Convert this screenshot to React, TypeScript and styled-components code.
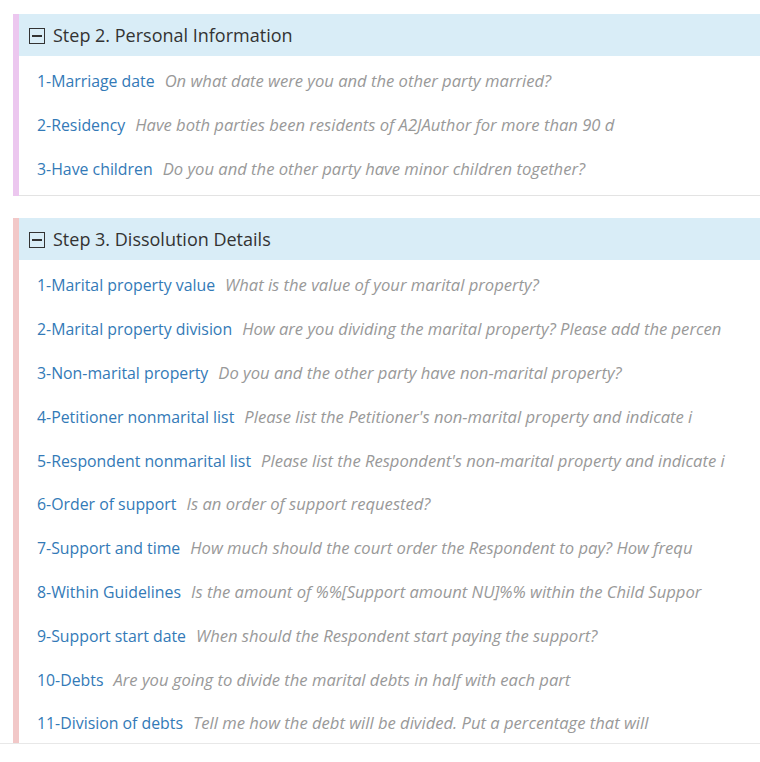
import React from "react";
import styled, { createGlobalStyle } from "styled-components";

interface Question {
    name: string;
    text: string;
}

interface Step {
    title: string;
    accent: string;
    questions: Question[];
}

const steps: Step[] = [
    {
        title: "Step 2. Personal Information",
        accent: "#ecc7ef",
        questions: [
            { name: "1-Marriage date", text: "On what date were you and the other party married?" },
            { name: "2-Residency", text: "Have both parties been residents of A2JAuthor for more than 90 d" },
            { name: "3-Have children", text: "Do you and the other party have minor children together?" },
        ],
    },
    {
        title: "Step 3. Dissolution Details",
        accent: "#f2c8c8",
        questions: [
            { name: "1-Marital property value", text: "What is the value of your marital property?" },
            { name: "2-Marital property division", text: "How are you dividing the marital property? Please add the percen" },
            { name: "3-Non-marital property", text: "Do you and the other party have non-marital property?" },
            { name: "4-Petitioner nonmarital list", text: "Please list the Petitioner's non-marital property and indicate i" },
            { name: "5-Respondent nonmarital list", text: "Please list the Respondent's non-marital property and indicate i" },
            { name: "6-Order of support", text: "Is an order of support requested?" },
            { name: "7-Support and time", text: "How much should the court order the Respondent to pay? How frequ" },
            { name: "8-Within Guidelines", text: "Is the amount of %%[Support amount NU]%% within the Child Suppor" },
            { name: "9-Support start date", text: "When should the Respondent start paying the support?" },
            { name: "10-Debts", text: "Are you going to divide the marital debts in half with each part" },
            { name: "11-Division of debts", text: "Tell me how the debt will be divided. Put a percentage that will" },
        ],
    },
];

const GlobalStyle = createGlobalStyle`
    body {
        margin: 0;
        background: #fff;
        font-family: "Open Sans", "Noto Sans", sans-serif;
    }
`;

const Viewport = styled.div`
    height: 744px;
    overflow: hidden;
    border-bottom: 1px solid #e8e8e8;
    padding: 14px 0 0 13px;
    box-sizing: border-box;
`;

const Panel = styled.section<{ $accent: string }>`
    border-left: 6px solid ${(p) => p.$accent};
    margin-bottom: 22px;
`;

const Header = styled.div`
    height: 42px;
    background: #d9edf7;
    display: flex;
    align-items: center;
    gap: 8px;
    padding-left: 10px;
    color: #333;
    font-size: 18px;
    cursor: pointer;
`;

const Toggle = styled.span`
    width: 14px;
    height: 14px;
    border: 1px solid #333;
    position: relative;
    flex-shrink: 0;
    margin-top: 1px;
    &::after {
        content: "";
        position: absolute;
        left: 2px;
        right: 2px;
        top: 6px;
        height: 2px;
        background: #333;
    }
`;

const List = styled.ul`
    list-style: none;
    margin: 0;
    padding: 3px 0 5px;
    border-bottom: 1px solid #e3e3e3;
`;

const Row = styled.li`
    height: 43.8px;
    line-height: 43.8px;
    padding-left: 18px;
    white-space: nowrap;
    overflow: hidden;
`;

const Name = styled.a`
    color: #337ab7;
    font-size: 15.85px;
    text-decoration: none;
`;

const Prompt = styled.span`
    color: #999;
    font-size: 16.6px;
    font-style: italic;
    margin-left: 10px;
`;

const App: React.FC = () => {
    return (
        <>
            <GlobalStyle />
            <Viewport>
                {steps.map((step) => (
                    <Panel key={step.title} $accent={step.accent}>
                        <Header>
                            <Toggle />
                            {step.title}
                        </Header>
                        <List>
                            {step.questions.map((q) => (
                                <Row key={q.name}>
                                    <Name href="#">{q.name}</Name>
                                    <Prompt>{q.text}</Prompt>
                                </Row>
                            ))}
                        </List>
                    </Panel>
                ))}
            </Viewport>
        </>
    );
};

export default App;
